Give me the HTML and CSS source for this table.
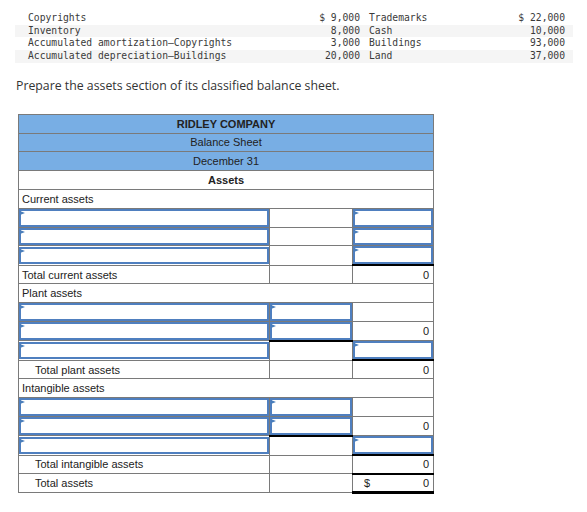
FILE: index.html
```html
<!DOCTYPE html>
<html>
<head>
<meta charset="utf-8">
<link rel="stylesheet" href="styles.css">
</head>
<body>
<div class="data">
  <div class="data-row"><span class="lbl">Copyrights</span><span class="num">$ 9,000</span><span class="lbl2">Trademarks</span><span class="num">$ 22,000</span></div>
  <div class="data-row"><span class="lbl">Inventory</span><span class="num">8,000</span><span class="lbl2">Cash</span><span class="num">10,000</span></div>
  <div class="data-row"><span class="lbl">Accumulated amortization—Copyrights</span><span class="num">3,000</span><span class="lbl2">Buildings</span><span class="num">93,000</span></div>
  <div class="data-row"><span class="lbl">Accumulated depreciation—Buildings</span><span class="num">20,000</span><span class="lbl2">Land</span><span class="num">37,000</span></div>
</div>
<p class="prompt">Prepare the assets section of its classified balance sheet.</p>
<table class="sheet">
  <colgroup><col class="c1"><col class="c2"><col class="c3"></colgroup>
  <tr class="hd"><td colspan="3" class="b">RIDLEY COMPANY</td></tr>
  <tr class="hd"><td colspan="3">Balance Sheet</td></tr>
  <tr class="hd"><td colspan="3">December 31</td></tr>
  <tr><td colspan="3" class="b center">Assets</td></tr>

  <tr><td colspan="3">Current assets</td></tr>
  <tr><td class="in"><div class="box"></div></td><td></td><td class="in"><div class="box"></div></td></tr>
  <tr><td class="in"><div class="box"></div></td><td></td><td class="in"><div class="box"></div></td></tr>
  <tr><td class="in"><div class="box"></div></td><td></td><td class="in ul"><div class="box"></div></td></tr>
  <tr><td>Total current assets</td><td></td><td class="r">0</td></tr>

  <tr><td colspan="3">Plant assets</td></tr>
  <tr><td class="in"><div class="box"></div></td><td class="in"><div class="box"></div></td><td></td></tr>
  <tr><td class="in"><div class="box"></div></td><td class="in ul"><div class="box"></div></td><td class="r">0</td></tr>
  <tr><td class="in"><div class="box"></div></td><td></td><td class="in ul"><div class="box"></div></td></tr>
  <tr><td class="ind">Total plant assets</td><td></td><td class="r">0</td></tr>

  <tr><td colspan="3">Intangible assets</td></tr>
  <tr><td class="in"><div class="box"></div></td><td class="in"><div class="box"></div></td><td></td></tr>
  <tr><td class="in"><div class="box"></div></td><td class="in ul"><div class="box"></div></td><td class="r">0</td></tr>
  <tr><td class="in"><div class="box"></div></td><td></td><td class="in ul"><div class="box"></div></td></tr>
  <tr><td class="ind">Total intangible assets</td><td></td><td class="r ul">0</td></tr>
  <tr><td class="ind">Total assets</td><td></td><td class="dbl"><span class="dollar">$</span><span>0</span></td></tr>
</table>
</body>
</html>
```
FILE: styles.css
```css
html, body {
  margin: 0;
  padding: 0;
  background: #fff;
}
body {
  font-family: "Liberation Sans", Arial, sans-serif;
  color: #222;
}
.data {
  margin: 12px 0 0 15px;
  width: 558px;
  font-family: "DejaVu Sans Mono", monospace;
  font-size: 9.7px;
  color: #3a3a3a;
}
.data-row {
  display: grid;
  grid-template-columns: 285px 60px 141px 72px;
  height: 12.7px;
  line-height: 12.7px;
  white-space: nowrap;
}
.data-row:nth-child(even) {
  background: #f5f5f5;
}
.lbl { padding-left: 13px; }
.lbl2 { padding-left: 9px; }
.num { text-align: right; }
.data-row .num:last-child { padding-right: 8px; }

.prompt {
  margin: 14px 0 0 16px;
  font-family: "Open Sans", sans-serif;
  font-size: 12.3px;
  line-height: 17px;
  color: #333;
}
.sheet {
  margin: 20px 0 0 18px;
  border-collapse: collapse;
  table-layout: fixed;
  width: 415px;
  font-size: 11px;
  color: #222;
}
.c1 { width: 251px; }
.c2 { width: 83px; }
.c3 { width: 81px; }
.sheet tr { height: 18.8px; }
.sheet td {
  border: 1px solid #7a7a7a;
  padding: 0 3px;
  vertical-align: middle;
  white-space: nowrap;
}
.sheet .hd td {
  background: #78aee4;
  text-align: center;
}
.sheet td.b { font-weight: bold; }
.sheet td.center { text-align: center; }
.sheet td.ind { padding-left: 16px; }
.sheet td.r { text-align: right; padding-right: 4px; }
.sheet td.in { padding: 0; }
.sheet td.ul { border-bottom: 2px solid #000; }
.sheet td.dbl {
  border-bottom: 3px solid #000;
  padding: 0 4px 0 11px;
}
.dbl {
  text-align: right;
}
.dbl .dollar {
  float: left;
}
.box {
  position: relative;
  height: 17.8px;
  box-sizing: border-box;
  border: 2px solid #4f7fbf;
  background: #fff;
}
.box::before {
  content: "";
  position: absolute;
  left: -1px;
  top: 0;
  border-left: 5px solid #4a7ebb;
  border-top: 2px solid transparent;
  border-bottom: 2px solid transparent;
}
```
